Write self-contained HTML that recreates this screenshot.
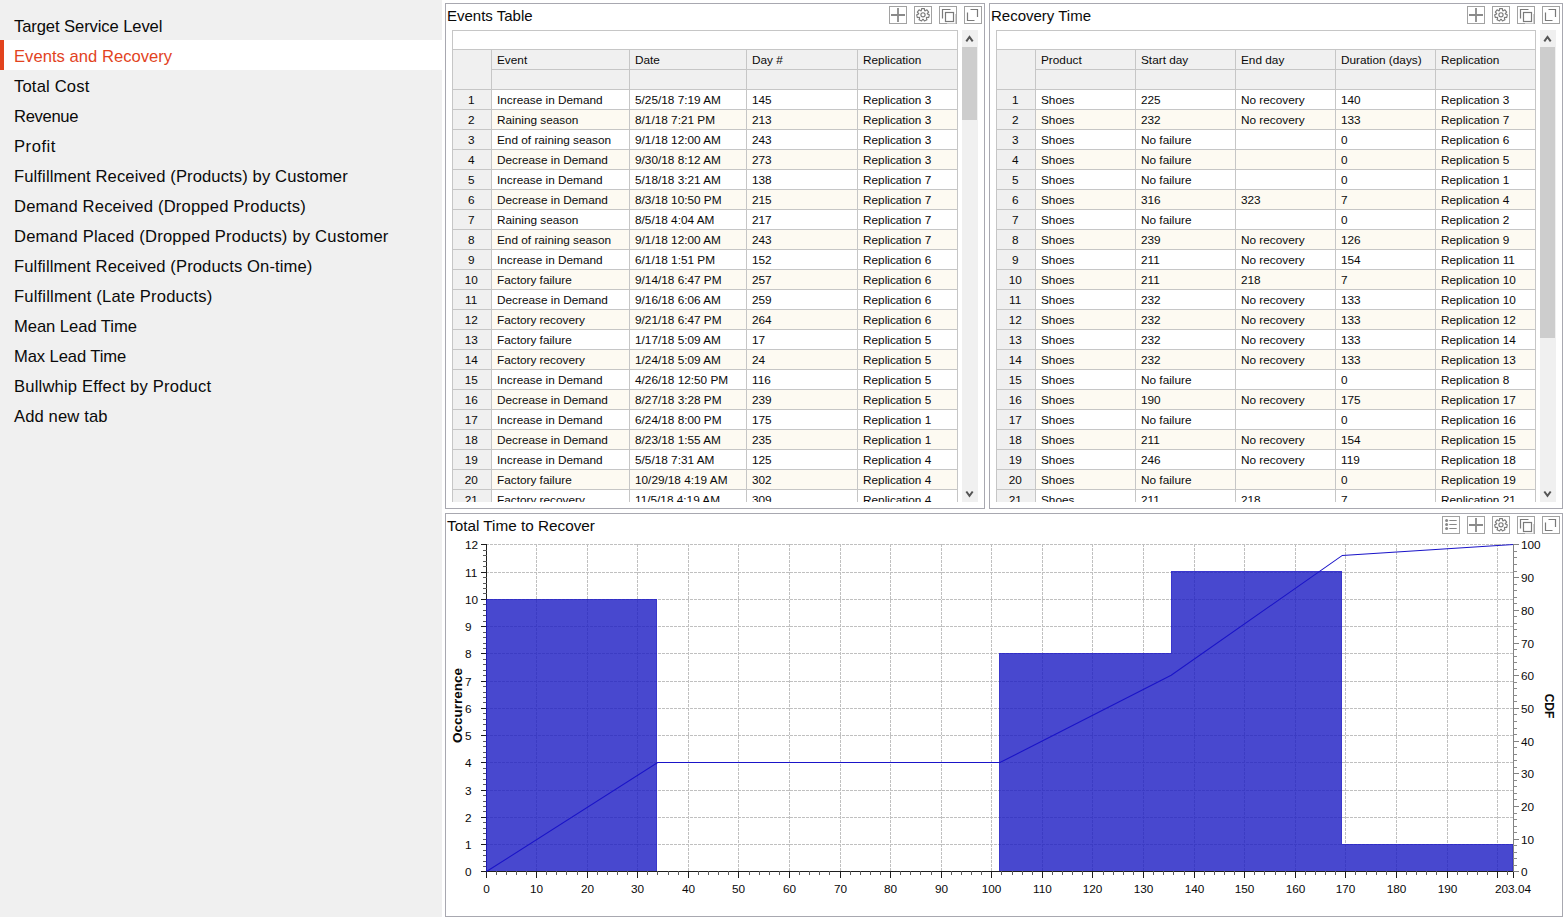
<!DOCTYPE html><html><head><meta charset="utf-8"><title>Events and Recovery</title>
<style>html,body{margin:0;padding:0;background:#fff;overflow:hidden;width:1563px;height:917px}svg{display:block;font-family:"Liberation Sans",sans-serif}</style></head><body>
<svg width="1563" height="917" viewBox="0 0 1563 917">
<defs>
<clipPath id="c1"><rect x="452" y="30" width="506" height="472"/></clipPath>
<clipPath id="c2"><rect x="996" y="30" width="540" height="472"/></clipPath>
</defs>
<g shape-rendering="crispEdges">
<rect x="0" y="0" width="442" height="917" fill="#f0f0f0"/>
<rect x="0" y="40" width="442" height="30" fill="#ffffff"/>
<rect x="0" y="40" width="4" height="30" fill="#e2431e"/>
</g>
<text x="14" y="32" font-size="16.6" fill="#0a0a0a" font-weight="normal" textLength="148.44" lengthAdjust="spacing">Target Service Level</text>
<text x="14" y="62" font-size="16.6" fill="#e2431e" font-weight="normal" textLength="158.13" lengthAdjust="spacing">Events and Recovery</text>
<text x="14" y="92" font-size="16.6" fill="#0a0a0a" font-weight="normal" textLength="75.28" lengthAdjust="spacing">Total Cost</text>
<text x="14" y="122" font-size="16.6" fill="#0a0a0a" font-weight="normal" textLength="64.44" lengthAdjust="spacing">Revenue</text>
<text x="14" y="152" font-size="16.6" fill="#0a0a0a" font-weight="normal" textLength="41.43" lengthAdjust="spacing">Profit</text>
<text x="14" y="182" font-size="16.6" fill="#0a0a0a" font-weight="normal" textLength="333.72" lengthAdjust="spacing">Fulfillment Received (Products) by Customer</text>
<text x="14" y="212" font-size="16.6" fill="#0a0a0a" font-weight="normal" textLength="291.82" lengthAdjust="spacing">Demand Received (Dropped Products)</text>
<text x="14" y="242" font-size="16.6" fill="#0a0a0a" font-weight="normal" textLength="374.36" lengthAdjust="spacing">Demand Placed (Dropped Products) by Customer</text>
<text x="14" y="272" font-size="16.6" fill="#0a0a0a" font-weight="normal" textLength="298.37" lengthAdjust="spacing">Fulfillment Received (Products On-time)</text>
<text x="14" y="302" font-size="16.6" fill="#0a0a0a" font-weight="normal" textLength="198.27" lengthAdjust="spacing">Fulfillment (Late Products)</text>
<text x="14" y="332" font-size="16.6" fill="#0a0a0a" font-weight="normal" textLength="122.91" lengthAdjust="spacing">Mean Lead Time</text>
<text x="14" y="362" font-size="16.6" fill="#0a0a0a" font-weight="normal" textLength="112.15" lengthAdjust="spacing">Max Lead Time</text>
<text x="14" y="392" font-size="16.6" fill="#0a0a0a" font-weight="normal" textLength="197.07" lengthAdjust="spacing">Bullwhip Effect by Product</text>
<text x="14" y="422" font-size="16.6" fill="#0a0a0a" font-weight="normal" textLength="93.47" lengthAdjust="spacing">Add new tab</text>
<g shape-rendering="crispEdges" fill="none" stroke="#a8a8b0" stroke-width="1">
<rect x="445.5" y="3.5" width="539" height="505"/>
<rect x="989.5" y="3.5" width="573" height="505"/>
<rect x="445.5" y="513.5" width="1117" height="403"/>
</g>
<text x="447" y="21" font-size="15" fill="#0a0a0a" text-anchor="start" font-weight="normal" >Events Table</text>
<text x="991" y="21" font-size="15" fill="#0a0a0a" text-anchor="start" font-weight="normal" >Recovery Time</text>
<text x="447" y="531" font-size="15.3" fill="#0a0a0a" text-anchor="start" font-weight="normal" >Total Time to Recover</text>
<rect x="889.5" y="6.5" width="17" height="17" fill="none" stroke="#a2a2a2" shape-rendering="crispEdges"/><path d="M891 15H905M898 8V22" stroke="#8a8a8a" stroke-width="1.8" fill="none"/>
<rect x="914.5" y="6.5" width="17" height="17" fill="none" stroke="#a2a2a2" shape-rendering="crispEdges"/><path d="M921.31 10.63 L921.58 8.66 L924.42 8.66 L924.69 10.63 L925.21 10.88 L926.92 9.86 L928.68 12.08 L927.31 13.52 L927.44 14.08 L929.30 14.78 L928.67 17.55 L926.69 17.37 L926.33 17.83 L926.94 19.72 L924.39 20.95 L923.29 19.29 L922.71 19.29 L921.61 20.95 L919.06 19.72 L919.67 17.83 L919.31 17.37 L917.33 17.55 L916.70 14.78 L918.56 14.08 L918.69 13.52 L917.32 12.08 L919.08 9.86 L920.79 10.88Z" fill="none" stroke="#7a7a7a" stroke-width="1.15" stroke-linejoin="round"/><circle cx="923" cy="14.8" r="2.1" fill="none" stroke="#7a7a7a" stroke-width="1.15"/>
<rect x="939.5" y="6.5" width="17" height="17" fill="none" stroke="#a2a2a2" shape-rendering="crispEdges"/><path d="M955.5 14V23.5H947" fill="none" stroke="#cfcfcf" stroke-width="1"/><path d="M942.5 18.5V9.5H950.5" fill="none" stroke="#7a7a7a" stroke-width="1.2"/><rect x="945.5" y="12.5" width="8" height="9" fill="none" stroke="#7a7a7a" stroke-width="1.2"/>
<rect x="964.5" y="6.5" width="17" height="17" fill="none" stroke="#a2a2a2" shape-rendering="crispEdges"/><path d="M970.5 9.5H977.5V17M967.5 12.5V20.5H974.5" fill="none" stroke="#7a7a7a" stroke-width="1.2"/>
<rect x="1467.5" y="6.5" width="17" height="17" fill="none" stroke="#a2a2a2" shape-rendering="crispEdges"/><path d="M1469 15H1483M1476 8V22" stroke="#8a8a8a" stroke-width="1.8" fill="none"/>
<rect x="1492.5" y="6.5" width="17" height="17" fill="none" stroke="#a2a2a2" shape-rendering="crispEdges"/><path d="M1499.31 10.63 L1499.58 8.66 L1502.42 8.66 L1502.69 10.63 L1503.21 10.88 L1504.92 9.86 L1506.68 12.08 L1505.31 13.52 L1505.44 14.08 L1507.30 14.78 L1506.67 17.55 L1504.69 17.37 L1504.33 17.83 L1504.94 19.72 L1502.39 20.95 L1501.29 19.29 L1500.71 19.29 L1499.61 20.95 L1497.06 19.72 L1497.67 17.83 L1497.31 17.37 L1495.33 17.55 L1494.70 14.78 L1496.56 14.08 L1496.69 13.52 L1495.32 12.08 L1497.08 9.86 L1498.79 10.88Z" fill="none" stroke="#7a7a7a" stroke-width="1.15" stroke-linejoin="round"/><circle cx="1501" cy="14.8" r="2.1" fill="none" stroke="#7a7a7a" stroke-width="1.15"/>
<rect x="1517.5" y="6.5" width="17" height="17" fill="none" stroke="#a2a2a2" shape-rendering="crispEdges"/><path d="M1533.5 14V23.5H1525" fill="none" stroke="#cfcfcf" stroke-width="1"/><path d="M1520.5 18.5V9.5H1528.5" fill="none" stroke="#7a7a7a" stroke-width="1.2"/><rect x="1523.5" y="12.5" width="8" height="9" fill="none" stroke="#7a7a7a" stroke-width="1.2"/>
<rect x="1542.5" y="6.5" width="17" height="17" fill="none" stroke="#a2a2a2" shape-rendering="crispEdges"/><path d="M1548.5 9.5H1555.5V17M1545.5 12.5V20.5H1552.5" fill="none" stroke="#7a7a7a" stroke-width="1.2"/>
<rect x="1442.5" y="516.5" width="17" height="17" fill="none" stroke="#a2a2a2" shape-rendering="crispEdges"/><circle cx="1446.6" cy="520.5" r="1.5" fill="#888"/><path d="M1449.3 520.5H1456.7" stroke="#888" stroke-width="1"/><circle cx="1446.6" cy="524.5" r="1.5" fill="#888"/><path d="M1449.3 524.5H1456.7" stroke="#888" stroke-width="1"/><circle cx="1446.6" cy="528.5" r="1.5" fill="#888"/><path d="M1449.3 528.5H1456.7" stroke="#888" stroke-width="1"/>
<rect x="1467.5" y="516.5" width="17" height="17" fill="none" stroke="#a2a2a2" shape-rendering="crispEdges"/><path d="M1469 525H1483M1476 518V532" stroke="#8a8a8a" stroke-width="1.8" fill="none"/>
<rect x="1492.5" y="516.5" width="17" height="17" fill="none" stroke="#a2a2a2" shape-rendering="crispEdges"/><path d="M1499.31 520.63 L1499.58 518.66 L1502.42 518.66 L1502.69 520.63 L1503.21 520.88 L1504.92 519.86 L1506.68 522.08 L1505.31 523.52 L1505.44 524.08 L1507.30 524.78 L1506.67 527.55 L1504.69 527.37 L1504.33 527.83 L1504.94 529.72 L1502.39 530.95 L1501.29 529.29 L1500.71 529.29 L1499.61 530.95 L1497.06 529.72 L1497.67 527.83 L1497.31 527.37 L1495.33 527.55 L1494.70 524.78 L1496.56 524.08 L1496.69 523.52 L1495.32 522.08 L1497.08 519.86 L1498.79 520.88Z" fill="none" stroke="#7a7a7a" stroke-width="1.15" stroke-linejoin="round"/><circle cx="1501" cy="524.8" r="2.1" fill="none" stroke="#7a7a7a" stroke-width="1.15"/>
<rect x="1517.5" y="516.5" width="17" height="17" fill="none" stroke="#a2a2a2" shape-rendering="crispEdges"/><path d="M1533.5 524V533.5H1525" fill="none" stroke="#cfcfcf" stroke-width="1"/><path d="M1520.5 528.5V519.5H1528.5" fill="none" stroke="#7a7a7a" stroke-width="1.2"/><rect x="1523.5" y="522.5" width="8" height="9" fill="none" stroke="#7a7a7a" stroke-width="1.2"/>
<rect x="1542.5" y="516.5" width="17" height="17" fill="none" stroke="#a2a2a2" shape-rendering="crispEdges"/><path d="M1548.5 519.5H1555.5V527M1545.5 522.5V530.5H1552.5" fill="none" stroke="#7a7a7a" stroke-width="1.2"/>
<g clip-path="url(#c1)">
<g shape-rendering="crispEdges">
<rect x="452" y="49" width="39" height="453" fill="#f0f0f0"/>
<rect x="491" y="49" width="466" height="40" fill="#f0f0f0"/>
<rect x="491" y="89" width="466" height="20" fill="#ffffff"/>
<rect x="491" y="109" width="466" height="20" fill="#fdfaf2"/>
<rect x="491" y="129" width="466" height="20" fill="#ffffff"/>
<rect x="491" y="149" width="466" height="20" fill="#fdfaf2"/>
<rect x="491" y="169" width="466" height="20" fill="#ffffff"/>
<rect x="491" y="189" width="466" height="20" fill="#fdfaf2"/>
<rect x="491" y="209" width="466" height="20" fill="#ffffff"/>
<rect x="491" y="229" width="466" height="20" fill="#fdfaf2"/>
<rect x="491" y="249" width="466" height="20" fill="#ffffff"/>
<rect x="491" y="269" width="466" height="20" fill="#fdfaf2"/>
<rect x="491" y="289" width="466" height="20" fill="#ffffff"/>
<rect x="491" y="309" width="466" height="20" fill="#fdfaf2"/>
<rect x="491" y="329" width="466" height="20" fill="#ffffff"/>
<rect x="491" y="349" width="466" height="20" fill="#fdfaf2"/>
<rect x="491" y="369" width="466" height="20" fill="#ffffff"/>
<rect x="491" y="389" width="466" height="20" fill="#fdfaf2"/>
<rect x="491" y="409" width="466" height="20" fill="#ffffff"/>
<rect x="491" y="429" width="466" height="20" fill="#fdfaf2"/>
<rect x="491" y="449" width="466" height="20" fill="#ffffff"/>
<rect x="491" y="469" width="466" height="20" fill="#fdfaf2"/>
<rect x="491" y="489" width="466" height="20" fill="#ffffff"/>
<path d="M452 30.5H958 M452 49.5H958 M491 69.5H958 M452 89.5H958 M452 109.5H958 M452 129.5H958 M452 149.5H958 M452 169.5H958 M452 189.5H958 M452 209.5H958 M452 229.5H958 M452 249.5H958 M452 269.5H958 M452 289.5H958 M452 309.5H958 M452 329.5H958 M452 349.5H958 M452 369.5H958 M452 389.5H958 M452 409.5H958 M452 429.5H958 M452 449.5H958 M452 469.5H958 M452 489.5H958 M452 509.5H958 M452.5 30V502 M957.5 30V502 M491.5 49V502 M629.5 49V502 M746.5 49V502 M857.5 49V502" stroke="#c6c6c6" stroke-width="1" fill="none"/>
</g>
<text x="497" y="64" font-size="11.8" fill="#0a0a0a" text-anchor="start" font-weight="normal" >Event</text>
<text x="635" y="64" font-size="11.8" fill="#0a0a0a" text-anchor="start" font-weight="normal" >Date</text>
<text x="752" y="64" font-size="11.8" fill="#0a0a0a" text-anchor="start" font-weight="normal" >Day #</text>
<text x="863" y="64" font-size="11.8" fill="#0a0a0a" text-anchor="start" font-weight="normal" >Replication</text>
<text x="471.2" y="104" font-size="11.8" fill="#0a0a0a" text-anchor="middle" font-weight="normal" >1</text>
<text x="497" y="104" font-size="11.8" fill="#0a0a0a" text-anchor="start" font-weight="normal" >Increase in Demand</text>
<text x="635" y="104" font-size="11.8" fill="#0a0a0a" text-anchor="start" font-weight="normal" >5/25/18 7:19 AM</text>
<text x="752" y="104" font-size="11.8" fill="#0a0a0a" text-anchor="start" font-weight="normal" >145</text>
<text x="863" y="104" font-size="11.8" fill="#0a0a0a" text-anchor="start" font-weight="normal" >Replication 3</text>
<text x="471.2" y="124" font-size="11.8" fill="#0a0a0a" text-anchor="middle" font-weight="normal" >2</text>
<text x="497" y="124" font-size="11.8" fill="#0a0a0a" text-anchor="start" font-weight="normal" >Raining season</text>
<text x="635" y="124" font-size="11.8" fill="#0a0a0a" text-anchor="start" font-weight="normal" >8/1/18 7:21 PM</text>
<text x="752" y="124" font-size="11.8" fill="#0a0a0a" text-anchor="start" font-weight="normal" >213</text>
<text x="863" y="124" font-size="11.8" fill="#0a0a0a" text-anchor="start" font-weight="normal" >Replication 3</text>
<text x="471.2" y="144" font-size="11.8" fill="#0a0a0a" text-anchor="middle" font-weight="normal" >3</text>
<text x="497" y="144" font-size="11.8" fill="#0a0a0a" text-anchor="start" font-weight="normal" >End of raining season</text>
<text x="635" y="144" font-size="11.8" fill="#0a0a0a" text-anchor="start" font-weight="normal" >9/1/18 12:00 AM</text>
<text x="752" y="144" font-size="11.8" fill="#0a0a0a" text-anchor="start" font-weight="normal" >243</text>
<text x="863" y="144" font-size="11.8" fill="#0a0a0a" text-anchor="start" font-weight="normal" >Replication 3</text>
<text x="471.2" y="164" font-size="11.8" fill="#0a0a0a" text-anchor="middle" font-weight="normal" >4</text>
<text x="497" y="164" font-size="11.8" fill="#0a0a0a" text-anchor="start" font-weight="normal" >Decrease in Demand</text>
<text x="635" y="164" font-size="11.8" fill="#0a0a0a" text-anchor="start" font-weight="normal" >9/30/18 8:12 AM</text>
<text x="752" y="164" font-size="11.8" fill="#0a0a0a" text-anchor="start" font-weight="normal" >273</text>
<text x="863" y="164" font-size="11.8" fill="#0a0a0a" text-anchor="start" font-weight="normal" >Replication 3</text>
<text x="471.2" y="184" font-size="11.8" fill="#0a0a0a" text-anchor="middle" font-weight="normal" >5</text>
<text x="497" y="184" font-size="11.8" fill="#0a0a0a" text-anchor="start" font-weight="normal" >Increase in Demand</text>
<text x="635" y="184" font-size="11.8" fill="#0a0a0a" text-anchor="start" font-weight="normal" >5/18/18 3:21 AM</text>
<text x="752" y="184" font-size="11.8" fill="#0a0a0a" text-anchor="start" font-weight="normal" >138</text>
<text x="863" y="184" font-size="11.8" fill="#0a0a0a" text-anchor="start" font-weight="normal" >Replication 7</text>
<text x="471.2" y="204" font-size="11.8" fill="#0a0a0a" text-anchor="middle" font-weight="normal" >6</text>
<text x="497" y="204" font-size="11.8" fill="#0a0a0a" text-anchor="start" font-weight="normal" >Decrease in Demand</text>
<text x="635" y="204" font-size="11.8" fill="#0a0a0a" text-anchor="start" font-weight="normal" >8/3/18 10:50 PM</text>
<text x="752" y="204" font-size="11.8" fill="#0a0a0a" text-anchor="start" font-weight="normal" >215</text>
<text x="863" y="204" font-size="11.8" fill="#0a0a0a" text-anchor="start" font-weight="normal" >Replication 7</text>
<text x="471.2" y="224" font-size="11.8" fill="#0a0a0a" text-anchor="middle" font-weight="normal" >7</text>
<text x="497" y="224" font-size="11.8" fill="#0a0a0a" text-anchor="start" font-weight="normal" >Raining season</text>
<text x="635" y="224" font-size="11.8" fill="#0a0a0a" text-anchor="start" font-weight="normal" >8/5/18 4:04 AM</text>
<text x="752" y="224" font-size="11.8" fill="#0a0a0a" text-anchor="start" font-weight="normal" >217</text>
<text x="863" y="224" font-size="11.8" fill="#0a0a0a" text-anchor="start" font-weight="normal" >Replication 7</text>
<text x="471.2" y="244" font-size="11.8" fill="#0a0a0a" text-anchor="middle" font-weight="normal" >8</text>
<text x="497" y="244" font-size="11.8" fill="#0a0a0a" text-anchor="start" font-weight="normal" >End of raining season</text>
<text x="635" y="244" font-size="11.8" fill="#0a0a0a" text-anchor="start" font-weight="normal" >9/1/18 12:00 AM</text>
<text x="752" y="244" font-size="11.8" fill="#0a0a0a" text-anchor="start" font-weight="normal" >243</text>
<text x="863" y="244" font-size="11.8" fill="#0a0a0a" text-anchor="start" font-weight="normal" >Replication 7</text>
<text x="471.2" y="264" font-size="11.8" fill="#0a0a0a" text-anchor="middle" font-weight="normal" >9</text>
<text x="497" y="264" font-size="11.8" fill="#0a0a0a" text-anchor="start" font-weight="normal" >Increase in Demand</text>
<text x="635" y="264" font-size="11.8" fill="#0a0a0a" text-anchor="start" font-weight="normal" >6/1/18 1:51 PM</text>
<text x="752" y="264" font-size="11.8" fill="#0a0a0a" text-anchor="start" font-weight="normal" >152</text>
<text x="863" y="264" font-size="11.8" fill="#0a0a0a" text-anchor="start" font-weight="normal" >Replication 6</text>
<text x="471.2" y="284" font-size="11.8" fill="#0a0a0a" text-anchor="middle" font-weight="normal" >10</text>
<text x="497" y="284" font-size="11.8" fill="#0a0a0a" text-anchor="start" font-weight="normal" >Factory failure</text>
<text x="635" y="284" font-size="11.8" fill="#0a0a0a" text-anchor="start" font-weight="normal" >9/14/18 6:47 PM</text>
<text x="752" y="284" font-size="11.8" fill="#0a0a0a" text-anchor="start" font-weight="normal" >257</text>
<text x="863" y="284" font-size="11.8" fill="#0a0a0a" text-anchor="start" font-weight="normal" >Replication 6</text>
<text x="471.2" y="304" font-size="11.8" fill="#0a0a0a" text-anchor="middle" font-weight="normal" >11</text>
<text x="497" y="304" font-size="11.8" fill="#0a0a0a" text-anchor="start" font-weight="normal" >Decrease in Demand</text>
<text x="635" y="304" font-size="11.8" fill="#0a0a0a" text-anchor="start" font-weight="normal" >9/16/18 6:06 AM</text>
<text x="752" y="304" font-size="11.8" fill="#0a0a0a" text-anchor="start" font-weight="normal" >259</text>
<text x="863" y="304" font-size="11.8" fill="#0a0a0a" text-anchor="start" font-weight="normal" >Replication 6</text>
<text x="471.2" y="324" font-size="11.8" fill="#0a0a0a" text-anchor="middle" font-weight="normal" >12</text>
<text x="497" y="324" font-size="11.8" fill="#0a0a0a" text-anchor="start" font-weight="normal" >Factory recovery</text>
<text x="635" y="324" font-size="11.8" fill="#0a0a0a" text-anchor="start" font-weight="normal" >9/21/18 6:47 PM</text>
<text x="752" y="324" font-size="11.8" fill="#0a0a0a" text-anchor="start" font-weight="normal" >264</text>
<text x="863" y="324" font-size="11.8" fill="#0a0a0a" text-anchor="start" font-weight="normal" >Replication 6</text>
<text x="471.2" y="344" font-size="11.8" fill="#0a0a0a" text-anchor="middle" font-weight="normal" >13</text>
<text x="497" y="344" font-size="11.8" fill="#0a0a0a" text-anchor="start" font-weight="normal" >Factory failure</text>
<text x="635" y="344" font-size="11.8" fill="#0a0a0a" text-anchor="start" font-weight="normal" >1/17/18 5:09 AM</text>
<text x="752" y="344" font-size="11.8" fill="#0a0a0a" text-anchor="start" font-weight="normal" >17</text>
<text x="863" y="344" font-size="11.8" fill="#0a0a0a" text-anchor="start" font-weight="normal" >Replication 5</text>
<text x="471.2" y="364" font-size="11.8" fill="#0a0a0a" text-anchor="middle" font-weight="normal" >14</text>
<text x="497" y="364" font-size="11.8" fill="#0a0a0a" text-anchor="start" font-weight="normal" >Factory recovery</text>
<text x="635" y="364" font-size="11.8" fill="#0a0a0a" text-anchor="start" font-weight="normal" >1/24/18 5:09 AM</text>
<text x="752" y="364" font-size="11.8" fill="#0a0a0a" text-anchor="start" font-weight="normal" >24</text>
<text x="863" y="364" font-size="11.8" fill="#0a0a0a" text-anchor="start" font-weight="normal" >Replication 5</text>
<text x="471.2" y="384" font-size="11.8" fill="#0a0a0a" text-anchor="middle" font-weight="normal" >15</text>
<text x="497" y="384" font-size="11.8" fill="#0a0a0a" text-anchor="start" font-weight="normal" >Increase in Demand</text>
<text x="635" y="384" font-size="11.8" fill="#0a0a0a" text-anchor="start" font-weight="normal" >4/26/18 12:50 PM</text>
<text x="752" y="384" font-size="11.8" fill="#0a0a0a" text-anchor="start" font-weight="normal" >116</text>
<text x="863" y="384" font-size="11.8" fill="#0a0a0a" text-anchor="start" font-weight="normal" >Replication 5</text>
<text x="471.2" y="404" font-size="11.8" fill="#0a0a0a" text-anchor="middle" font-weight="normal" >16</text>
<text x="497" y="404" font-size="11.8" fill="#0a0a0a" text-anchor="start" font-weight="normal" >Decrease in Demand</text>
<text x="635" y="404" font-size="11.8" fill="#0a0a0a" text-anchor="start" font-weight="normal" >8/27/18 3:28 PM</text>
<text x="752" y="404" font-size="11.8" fill="#0a0a0a" text-anchor="start" font-weight="normal" >239</text>
<text x="863" y="404" font-size="11.8" fill="#0a0a0a" text-anchor="start" font-weight="normal" >Replication 5</text>
<text x="471.2" y="424" font-size="11.8" fill="#0a0a0a" text-anchor="middle" font-weight="normal" >17</text>
<text x="497" y="424" font-size="11.8" fill="#0a0a0a" text-anchor="start" font-weight="normal" >Increase in Demand</text>
<text x="635" y="424" font-size="11.8" fill="#0a0a0a" text-anchor="start" font-weight="normal" >6/24/18 8:00 PM</text>
<text x="752" y="424" font-size="11.8" fill="#0a0a0a" text-anchor="start" font-weight="normal" >175</text>
<text x="863" y="424" font-size="11.8" fill="#0a0a0a" text-anchor="start" font-weight="normal" >Replication 1</text>
<text x="471.2" y="444" font-size="11.8" fill="#0a0a0a" text-anchor="middle" font-weight="normal" >18</text>
<text x="497" y="444" font-size="11.8" fill="#0a0a0a" text-anchor="start" font-weight="normal" >Decrease in Demand</text>
<text x="635" y="444" font-size="11.8" fill="#0a0a0a" text-anchor="start" font-weight="normal" >8/23/18 1:55 AM</text>
<text x="752" y="444" font-size="11.8" fill="#0a0a0a" text-anchor="start" font-weight="normal" >235</text>
<text x="863" y="444" font-size="11.8" fill="#0a0a0a" text-anchor="start" font-weight="normal" >Replication 1</text>
<text x="471.2" y="464" font-size="11.8" fill="#0a0a0a" text-anchor="middle" font-weight="normal" >19</text>
<text x="497" y="464" font-size="11.8" fill="#0a0a0a" text-anchor="start" font-weight="normal" >Increase in Demand</text>
<text x="635" y="464" font-size="11.8" fill="#0a0a0a" text-anchor="start" font-weight="normal" >5/5/18 7:31 AM</text>
<text x="752" y="464" font-size="11.8" fill="#0a0a0a" text-anchor="start" font-weight="normal" >125</text>
<text x="863" y="464" font-size="11.8" fill="#0a0a0a" text-anchor="start" font-weight="normal" >Replication 4</text>
<text x="471.2" y="484" font-size="11.8" fill="#0a0a0a" text-anchor="middle" font-weight="normal" >20</text>
<text x="497" y="484" font-size="11.8" fill="#0a0a0a" text-anchor="start" font-weight="normal" >Factory failure</text>
<text x="635" y="484" font-size="11.8" fill="#0a0a0a" text-anchor="start" font-weight="normal" >10/29/18 4:19 AM</text>
<text x="752" y="484" font-size="11.8" fill="#0a0a0a" text-anchor="start" font-weight="normal" >302</text>
<text x="863" y="484" font-size="11.8" fill="#0a0a0a" text-anchor="start" font-weight="normal" >Replication 4</text>
<text x="471.2" y="504" font-size="11.8" fill="#0a0a0a" text-anchor="middle" font-weight="normal" >21</text>
<text x="497" y="504" font-size="11.8" fill="#0a0a0a" text-anchor="start" font-weight="normal" >Factory recovery</text>
<text x="635" y="504" font-size="11.8" fill="#0a0a0a" text-anchor="start" font-weight="normal" >11/5/18 4:19 AM</text>
<text x="752" y="504" font-size="11.8" fill="#0a0a0a" text-anchor="start" font-weight="normal" >309</text>
<text x="863" y="504" font-size="11.8" fill="#0a0a0a" text-anchor="start" font-weight="normal" >Replication 4</text>
</g>
<g shape-rendering="crispEdges">
<rect x="962" y="30" width="16" height="472" fill="#f0f0f0"/>
<rect x="962" y="47" width="15" height="73" fill="#cdcdcd"/>
</g>
<path d="M966.3 41.3L969.5 37L972.7 41.3" fill="none" stroke="#555" stroke-width="2"/>
<path d="M966.3 491.5L969.5 495.8L972.7 491.5" fill="none" stroke="#555" stroke-width="2"/>
<g clip-path="url(#c2)">
<g shape-rendering="crispEdges">
<rect x="996" y="49" width="39" height="453" fill="#f0f0f0"/>
<rect x="1035" y="49" width="500" height="40" fill="#f0f0f0"/>
<rect x="1035" y="89" width="500" height="20" fill="#ffffff"/>
<rect x="1035" y="109" width="500" height="20" fill="#fdfaf2"/>
<rect x="1035" y="129" width="500" height="20" fill="#ffffff"/>
<rect x="1035" y="149" width="500" height="20" fill="#fdfaf2"/>
<rect x="1035" y="169" width="500" height="20" fill="#ffffff"/>
<rect x="1035" y="189" width="500" height="20" fill="#fdfaf2"/>
<rect x="1035" y="209" width="500" height="20" fill="#ffffff"/>
<rect x="1035" y="229" width="500" height="20" fill="#fdfaf2"/>
<rect x="1035" y="249" width="500" height="20" fill="#ffffff"/>
<rect x="1035" y="269" width="500" height="20" fill="#fdfaf2"/>
<rect x="1035" y="289" width="500" height="20" fill="#ffffff"/>
<rect x="1035" y="309" width="500" height="20" fill="#fdfaf2"/>
<rect x="1035" y="329" width="500" height="20" fill="#ffffff"/>
<rect x="1035" y="349" width="500" height="20" fill="#fdfaf2"/>
<rect x="1035" y="369" width="500" height="20" fill="#ffffff"/>
<rect x="1035" y="389" width="500" height="20" fill="#fdfaf2"/>
<rect x="1035" y="409" width="500" height="20" fill="#ffffff"/>
<rect x="1035" y="429" width="500" height="20" fill="#fdfaf2"/>
<rect x="1035" y="449" width="500" height="20" fill="#ffffff"/>
<rect x="1035" y="469" width="500" height="20" fill="#fdfaf2"/>
<rect x="1035" y="489" width="500" height="20" fill="#ffffff"/>
<path d="M996 30.5H1536 M996 49.5H1536 M1035 69.5H1536 M996 89.5H1536 M996 109.5H1536 M996 129.5H1536 M996 149.5H1536 M996 169.5H1536 M996 189.5H1536 M996 209.5H1536 M996 229.5H1536 M996 249.5H1536 M996 269.5H1536 M996 289.5H1536 M996 309.5H1536 M996 329.5H1536 M996 349.5H1536 M996 369.5H1536 M996 389.5H1536 M996 409.5H1536 M996 429.5H1536 M996 449.5H1536 M996 469.5H1536 M996 489.5H1536 M996 509.5H1536 M996.5 30V502 M1535.5 30V502 M1035.5 49V502 M1135.5 49V502 M1235.5 49V502 M1335.5 49V502 M1435.5 49V502" stroke="#c6c6c6" stroke-width="1" fill="none"/>
</g>
<text x="1041" y="64" font-size="11.8" fill="#0a0a0a" text-anchor="start" font-weight="normal" >Product</text>
<text x="1141" y="64" font-size="11.8" fill="#0a0a0a" text-anchor="start" font-weight="normal" >Start day</text>
<text x="1241" y="64" font-size="11.8" fill="#0a0a0a" text-anchor="start" font-weight="normal" >End day</text>
<text x="1341" y="64" font-size="11.8" fill="#0a0a0a" text-anchor="start" font-weight="normal" >Duration (days)</text>
<text x="1441" y="64" font-size="11.8" fill="#0a0a0a" text-anchor="start" font-weight="normal" >Replication</text>
<text x="1015.2" y="104" font-size="11.8" fill="#0a0a0a" text-anchor="middle" font-weight="normal" >1</text>
<text x="1041" y="104" font-size="11.8" fill="#0a0a0a" text-anchor="start" font-weight="normal" >Shoes</text>
<text x="1141" y="104" font-size="11.8" fill="#0a0a0a" text-anchor="start" font-weight="normal" >225</text>
<text x="1241" y="104" font-size="11.8" fill="#0a0a0a" text-anchor="start" font-weight="normal" >No recovery</text>
<text x="1341" y="104" font-size="11.8" fill="#0a0a0a" text-anchor="start" font-weight="normal" >140</text>
<text x="1441" y="104" font-size="11.8" fill="#0a0a0a" text-anchor="start" font-weight="normal" >Replication 3</text>
<text x="1015.2" y="124" font-size="11.8" fill="#0a0a0a" text-anchor="middle" font-weight="normal" >2</text>
<text x="1041" y="124" font-size="11.8" fill="#0a0a0a" text-anchor="start" font-weight="normal" >Shoes</text>
<text x="1141" y="124" font-size="11.8" fill="#0a0a0a" text-anchor="start" font-weight="normal" >232</text>
<text x="1241" y="124" font-size="11.8" fill="#0a0a0a" text-anchor="start" font-weight="normal" >No recovery</text>
<text x="1341" y="124" font-size="11.8" fill="#0a0a0a" text-anchor="start" font-weight="normal" >133</text>
<text x="1441" y="124" font-size="11.8" fill="#0a0a0a" text-anchor="start" font-weight="normal" >Replication 7</text>
<text x="1015.2" y="144" font-size="11.8" fill="#0a0a0a" text-anchor="middle" font-weight="normal" >3</text>
<text x="1041" y="144" font-size="11.8" fill="#0a0a0a" text-anchor="start" font-weight="normal" >Shoes</text>
<text x="1141" y="144" font-size="11.8" fill="#0a0a0a" text-anchor="start" font-weight="normal" >No failure</text>
<text x="1341" y="144" font-size="11.8" fill="#0a0a0a" text-anchor="start" font-weight="normal" >0</text>
<text x="1441" y="144" font-size="11.8" fill="#0a0a0a" text-anchor="start" font-weight="normal" >Replication 6</text>
<text x="1015.2" y="164" font-size="11.8" fill="#0a0a0a" text-anchor="middle" font-weight="normal" >4</text>
<text x="1041" y="164" font-size="11.8" fill="#0a0a0a" text-anchor="start" font-weight="normal" >Shoes</text>
<text x="1141" y="164" font-size="11.8" fill="#0a0a0a" text-anchor="start" font-weight="normal" >No failure</text>
<text x="1341" y="164" font-size="11.8" fill="#0a0a0a" text-anchor="start" font-weight="normal" >0</text>
<text x="1441" y="164" font-size="11.8" fill="#0a0a0a" text-anchor="start" font-weight="normal" >Replication 5</text>
<text x="1015.2" y="184" font-size="11.8" fill="#0a0a0a" text-anchor="middle" font-weight="normal" >5</text>
<text x="1041" y="184" font-size="11.8" fill="#0a0a0a" text-anchor="start" font-weight="normal" >Shoes</text>
<text x="1141" y="184" font-size="11.8" fill="#0a0a0a" text-anchor="start" font-weight="normal" >No failure</text>
<text x="1341" y="184" font-size="11.8" fill="#0a0a0a" text-anchor="start" font-weight="normal" >0</text>
<text x="1441" y="184" font-size="11.8" fill="#0a0a0a" text-anchor="start" font-weight="normal" >Replication 1</text>
<text x="1015.2" y="204" font-size="11.8" fill="#0a0a0a" text-anchor="middle" font-weight="normal" >6</text>
<text x="1041" y="204" font-size="11.8" fill="#0a0a0a" text-anchor="start" font-weight="normal" >Shoes</text>
<text x="1141" y="204" font-size="11.8" fill="#0a0a0a" text-anchor="start" font-weight="normal" >316</text>
<text x="1241" y="204" font-size="11.8" fill="#0a0a0a" text-anchor="start" font-weight="normal" >323</text>
<text x="1341" y="204" font-size="11.8" fill="#0a0a0a" text-anchor="start" font-weight="normal" >7</text>
<text x="1441" y="204" font-size="11.8" fill="#0a0a0a" text-anchor="start" font-weight="normal" >Replication 4</text>
<text x="1015.2" y="224" font-size="11.8" fill="#0a0a0a" text-anchor="middle" font-weight="normal" >7</text>
<text x="1041" y="224" font-size="11.8" fill="#0a0a0a" text-anchor="start" font-weight="normal" >Shoes</text>
<text x="1141" y="224" font-size="11.8" fill="#0a0a0a" text-anchor="start" font-weight="normal" >No failure</text>
<text x="1341" y="224" font-size="11.8" fill="#0a0a0a" text-anchor="start" font-weight="normal" >0</text>
<text x="1441" y="224" font-size="11.8" fill="#0a0a0a" text-anchor="start" font-weight="normal" >Replication 2</text>
<text x="1015.2" y="244" font-size="11.8" fill="#0a0a0a" text-anchor="middle" font-weight="normal" >8</text>
<text x="1041" y="244" font-size="11.8" fill="#0a0a0a" text-anchor="start" font-weight="normal" >Shoes</text>
<text x="1141" y="244" font-size="11.8" fill="#0a0a0a" text-anchor="start" font-weight="normal" >239</text>
<text x="1241" y="244" font-size="11.8" fill="#0a0a0a" text-anchor="start" font-weight="normal" >No recovery</text>
<text x="1341" y="244" font-size="11.8" fill="#0a0a0a" text-anchor="start" font-weight="normal" >126</text>
<text x="1441" y="244" font-size="11.8" fill="#0a0a0a" text-anchor="start" font-weight="normal" >Replication 9</text>
<text x="1015.2" y="264" font-size="11.8" fill="#0a0a0a" text-anchor="middle" font-weight="normal" >9</text>
<text x="1041" y="264" font-size="11.8" fill="#0a0a0a" text-anchor="start" font-weight="normal" >Shoes</text>
<text x="1141" y="264" font-size="11.8" fill="#0a0a0a" text-anchor="start" font-weight="normal" >211</text>
<text x="1241" y="264" font-size="11.8" fill="#0a0a0a" text-anchor="start" font-weight="normal" >No recovery</text>
<text x="1341" y="264" font-size="11.8" fill="#0a0a0a" text-anchor="start" font-weight="normal" >154</text>
<text x="1441" y="264" font-size="11.8" fill="#0a0a0a" text-anchor="start" font-weight="normal" >Replication 11</text>
<text x="1015.2" y="284" font-size="11.8" fill="#0a0a0a" text-anchor="middle" font-weight="normal" >10</text>
<text x="1041" y="284" font-size="11.8" fill="#0a0a0a" text-anchor="start" font-weight="normal" >Shoes</text>
<text x="1141" y="284" font-size="11.8" fill="#0a0a0a" text-anchor="start" font-weight="normal" >211</text>
<text x="1241" y="284" font-size="11.8" fill="#0a0a0a" text-anchor="start" font-weight="normal" >218</text>
<text x="1341" y="284" font-size="11.8" fill="#0a0a0a" text-anchor="start" font-weight="normal" >7</text>
<text x="1441" y="284" font-size="11.8" fill="#0a0a0a" text-anchor="start" font-weight="normal" >Replication 10</text>
<text x="1015.2" y="304" font-size="11.8" fill="#0a0a0a" text-anchor="middle" font-weight="normal" >11</text>
<text x="1041" y="304" font-size="11.8" fill="#0a0a0a" text-anchor="start" font-weight="normal" >Shoes</text>
<text x="1141" y="304" font-size="11.8" fill="#0a0a0a" text-anchor="start" font-weight="normal" >232</text>
<text x="1241" y="304" font-size="11.8" fill="#0a0a0a" text-anchor="start" font-weight="normal" >No recovery</text>
<text x="1341" y="304" font-size="11.8" fill="#0a0a0a" text-anchor="start" font-weight="normal" >133</text>
<text x="1441" y="304" font-size="11.8" fill="#0a0a0a" text-anchor="start" font-weight="normal" >Replication 10</text>
<text x="1015.2" y="324" font-size="11.8" fill="#0a0a0a" text-anchor="middle" font-weight="normal" >12</text>
<text x="1041" y="324" font-size="11.8" fill="#0a0a0a" text-anchor="start" font-weight="normal" >Shoes</text>
<text x="1141" y="324" font-size="11.8" fill="#0a0a0a" text-anchor="start" font-weight="normal" >232</text>
<text x="1241" y="324" font-size="11.8" fill="#0a0a0a" text-anchor="start" font-weight="normal" >No recovery</text>
<text x="1341" y="324" font-size="11.8" fill="#0a0a0a" text-anchor="start" font-weight="normal" >133</text>
<text x="1441" y="324" font-size="11.8" fill="#0a0a0a" text-anchor="start" font-weight="normal" >Replication 12</text>
<text x="1015.2" y="344" font-size="11.8" fill="#0a0a0a" text-anchor="middle" font-weight="normal" >13</text>
<text x="1041" y="344" font-size="11.8" fill="#0a0a0a" text-anchor="start" font-weight="normal" >Shoes</text>
<text x="1141" y="344" font-size="11.8" fill="#0a0a0a" text-anchor="start" font-weight="normal" >232</text>
<text x="1241" y="344" font-size="11.8" fill="#0a0a0a" text-anchor="start" font-weight="normal" >No recovery</text>
<text x="1341" y="344" font-size="11.8" fill="#0a0a0a" text-anchor="start" font-weight="normal" >133</text>
<text x="1441" y="344" font-size="11.8" fill="#0a0a0a" text-anchor="start" font-weight="normal" >Replication 14</text>
<text x="1015.2" y="364" font-size="11.8" fill="#0a0a0a" text-anchor="middle" font-weight="normal" >14</text>
<text x="1041" y="364" font-size="11.8" fill="#0a0a0a" text-anchor="start" font-weight="normal" >Shoes</text>
<text x="1141" y="364" font-size="11.8" fill="#0a0a0a" text-anchor="start" font-weight="normal" >232</text>
<text x="1241" y="364" font-size="11.8" fill="#0a0a0a" text-anchor="start" font-weight="normal" >No recovery</text>
<text x="1341" y="364" font-size="11.8" fill="#0a0a0a" text-anchor="start" font-weight="normal" >133</text>
<text x="1441" y="364" font-size="11.8" fill="#0a0a0a" text-anchor="start" font-weight="normal" >Replication 13</text>
<text x="1015.2" y="384" font-size="11.8" fill="#0a0a0a" text-anchor="middle" font-weight="normal" >15</text>
<text x="1041" y="384" font-size="11.8" fill="#0a0a0a" text-anchor="start" font-weight="normal" >Shoes</text>
<text x="1141" y="384" font-size="11.8" fill="#0a0a0a" text-anchor="start" font-weight="normal" >No failure</text>
<text x="1341" y="384" font-size="11.8" fill="#0a0a0a" text-anchor="start" font-weight="normal" >0</text>
<text x="1441" y="384" font-size="11.8" fill="#0a0a0a" text-anchor="start" font-weight="normal" >Replication 8</text>
<text x="1015.2" y="404" font-size="11.8" fill="#0a0a0a" text-anchor="middle" font-weight="normal" >16</text>
<text x="1041" y="404" font-size="11.8" fill="#0a0a0a" text-anchor="start" font-weight="normal" >Shoes</text>
<text x="1141" y="404" font-size="11.8" fill="#0a0a0a" text-anchor="start" font-weight="normal" >190</text>
<text x="1241" y="404" font-size="11.8" fill="#0a0a0a" text-anchor="start" font-weight="normal" >No recovery</text>
<text x="1341" y="404" font-size="11.8" fill="#0a0a0a" text-anchor="start" font-weight="normal" >175</text>
<text x="1441" y="404" font-size="11.8" fill="#0a0a0a" text-anchor="start" font-weight="normal" >Replication 17</text>
<text x="1015.2" y="424" font-size="11.8" fill="#0a0a0a" text-anchor="middle" font-weight="normal" >17</text>
<text x="1041" y="424" font-size="11.8" fill="#0a0a0a" text-anchor="start" font-weight="normal" >Shoes</text>
<text x="1141" y="424" font-size="11.8" fill="#0a0a0a" text-anchor="start" font-weight="normal" >No failure</text>
<text x="1341" y="424" font-size="11.8" fill="#0a0a0a" text-anchor="start" font-weight="normal" >0</text>
<text x="1441" y="424" font-size="11.8" fill="#0a0a0a" text-anchor="start" font-weight="normal" >Replication 16</text>
<text x="1015.2" y="444" font-size="11.8" fill="#0a0a0a" text-anchor="middle" font-weight="normal" >18</text>
<text x="1041" y="444" font-size="11.8" fill="#0a0a0a" text-anchor="start" font-weight="normal" >Shoes</text>
<text x="1141" y="444" font-size="11.8" fill="#0a0a0a" text-anchor="start" font-weight="normal" >211</text>
<text x="1241" y="444" font-size="11.8" fill="#0a0a0a" text-anchor="start" font-weight="normal" >No recovery</text>
<text x="1341" y="444" font-size="11.8" fill="#0a0a0a" text-anchor="start" font-weight="normal" >154</text>
<text x="1441" y="444" font-size="11.8" fill="#0a0a0a" text-anchor="start" font-weight="normal" >Replication 15</text>
<text x="1015.2" y="464" font-size="11.8" fill="#0a0a0a" text-anchor="middle" font-weight="normal" >19</text>
<text x="1041" y="464" font-size="11.8" fill="#0a0a0a" text-anchor="start" font-weight="normal" >Shoes</text>
<text x="1141" y="464" font-size="11.8" fill="#0a0a0a" text-anchor="start" font-weight="normal" >246</text>
<text x="1241" y="464" font-size="11.8" fill="#0a0a0a" text-anchor="start" font-weight="normal" >No recovery</text>
<text x="1341" y="464" font-size="11.8" fill="#0a0a0a" text-anchor="start" font-weight="normal" >119</text>
<text x="1441" y="464" font-size="11.8" fill="#0a0a0a" text-anchor="start" font-weight="normal" >Replication 18</text>
<text x="1015.2" y="484" font-size="11.8" fill="#0a0a0a" text-anchor="middle" font-weight="normal" >20</text>
<text x="1041" y="484" font-size="11.8" fill="#0a0a0a" text-anchor="start" font-weight="normal" >Shoes</text>
<text x="1141" y="484" font-size="11.8" fill="#0a0a0a" text-anchor="start" font-weight="normal" >No failure</text>
<text x="1341" y="484" font-size="11.8" fill="#0a0a0a" text-anchor="start" font-weight="normal" >0</text>
<text x="1441" y="484" font-size="11.8" fill="#0a0a0a" text-anchor="start" font-weight="normal" >Replication 19</text>
<text x="1015.2" y="504" font-size="11.8" fill="#0a0a0a" text-anchor="middle" font-weight="normal" >21</text>
<text x="1041" y="504" font-size="11.8" fill="#0a0a0a" text-anchor="start" font-weight="normal" >Shoes</text>
<text x="1141" y="504" font-size="11.8" fill="#0a0a0a" text-anchor="start" font-weight="normal" >211</text>
<text x="1241" y="504" font-size="11.8" fill="#0a0a0a" text-anchor="start" font-weight="normal" >218</text>
<text x="1341" y="504" font-size="11.8" fill="#0a0a0a" text-anchor="start" font-weight="normal" >7</text>
<text x="1441" y="504" font-size="11.8" fill="#0a0a0a" text-anchor="start" font-weight="normal" >Replication 21</text>
</g>
<g shape-rendering="crispEdges">
<rect x="1540" y="30" width="16" height="472" fill="#f0f0f0"/>
<rect x="1540" y="47" width="15" height="291" fill="#cdcdcd"/>
</g>
<path d="M1544.3 41.3L1547.5 37L1550.7 41.3" fill="none" stroke="#555" stroke-width="2"/>
<path d="M1544.3 491.5L1547.5 495.8L1550.7 491.5" fill="none" stroke="#555" stroke-width="2"/>
<path d="M486 844.5H1513 M486 817.5H1513 M486 790.5H1513 M486 762.5H1513 M486 735.5H1513 M486 708.5H1513 M486 681.5H1513 M486 653.5H1513 M486 626.5H1513 M486 599.5H1513 M486 572.5H1513 M486 544.5H1513 M536.5 544V871 M587.5 544V871 M637.5 544V871 M688.5 544V871 M738.5 544V871 M789.5 544V871 M840.5 544V871 M890.5 544V871 M941.5 544V871 M991.5 544V871 M1042.5 544V871 M1092.5 544V871 M1143.5 544V871 M1194.5 544V871 M1244.5 544V871 M1295.5 544V871 M1345.5 544V871 M1396.5 544V871 M1447.5 544V871 M1497.5 544V871" stroke="#c0c0c0" stroke-width="1" stroke-dasharray="3 1" fill="none" shape-rendering="crispEdges"/>
<path d="M486.5 544V878 M481 871.5H1513 M481 871.5H487 M481 844.5H487 M481 817.5H487 M481 790.5H487 M481 762.5H487 M481 735.5H487 M481 708.5H487 M481 681.5H487 M481 653.5H487 M481 626.5H487 M481 599.5H487 M481 572.5H487 M481 544.5H487 M486.5 871V878 M536.5 871V878 M587.5 871V878 M637.5 871V878 M688.5 871V878 M738.5 871V878 M789.5 871V878 M840.5 871V878 M890.5 871V878 M941.5 871V878 M991.5 871V878 M1042.5 871V878 M1092.5 871V878 M1143.5 871V878 M1194.5 871V878 M1244.5 871V878 M1295.5 871V878 M1345.5 871V878 M1396.5 871V878 M1447.5 871V878 M1497.5 871V878 M1513.5 871V878" stroke="#1e1e1e" stroke-width="1" fill="none" shape-rendering="crispEdges"/>
<path d="M483 866.5H487 M483 861.5H487 M483 855.5H487 M483 850.5H487 M483 839.5H487 M483 833.5H487 M483 828.5H487 M483 822.5H487 M483 811.5H487 M483 806.5H487 M483 801.5H487 M483 795.5H487 M483 784.5H487 M483 779.5H487 M483 773.5H487 M483 768.5H487 M483 757.5H487 M483 752.5H487 M483 746.5H487 M483 741.5H487 M483 730.5H487 M483 724.5H487 M483 719.5H487 M483 713.5H487 M483 702.5H487 M483 697.5H487 M483 692.5H487 M483 686.5H487 M483 675.5H487 M483 670.5H487 M483 664.5H487 M483 659.5H487 M483 648.5H487 M483 643.5H487 M483 637.5H487 M483 632.5H487 M483 621.5H487 M483 615.5H487 M483 610.5H487 M483 604.5H487 M483 593.5H487 M483 588.5H487 M483 583.5H487 M483 577.5H487 M483 566.5H487 M483 561.5H487 M483 555.5H487 M483 550.5H487 M496.5 871V875 M506.5 871V875 M516.5 871V875 M526.5 871V875 M546.5 871V875 M556.5 871V875 M566.5 871V875 M577.5 871V875 M597.5 871V875 M607.5 871V875 M617.5 871V875 M627.5 871V875 M647.5 871V875 M657.5 871V875 M668.5 871V875 M678.5 871V875 M698.5 871V875 M708.5 871V875 M718.5 871V875 M728.5 871V875 M749.5 871V875 M759.5 871V875 M769.5 871V875 M779.5 871V875 M799.5 871V875 M809.5 871V875 M819.5 871V875 M829.5 871V875 M850.5 871V875 M860.5 871V875 M870.5 871V875 M880.5 871V875 M900.5 871V875 M910.5 871V875 M920.5 871V875 M931.5 871V875 M951.5 871V875 M961.5 871V875 M971.5 871V875 M981.5 871V875 M1001.5 871V875 M1012.5 871V875 M1022.5 871V875 M1032.5 871V875 M1052.5 871V875 M1062.5 871V875 M1072.5 871V875 M1082.5 871V875 M1103.5 871V875 M1113.5 871V875 M1123.5 871V875 M1133.5 871V875 M1153.5 871V875 M1163.5 871V875 M1173.5 871V875 M1184.5 871V875 M1204.5 871V875 M1214.5 871V875 M1224.5 871V875 M1234.5 871V875 M1254.5 871V875 M1264.5 871V875 M1275.5 871V875 M1285.5 871V875 M1305.5 871V875 M1315.5 871V875 M1325.5 871V875 M1335.5 871V875 M1355.5 871V875 M1366.5 871V875 M1376.5 871V875 M1386.5 871V875 M1406.5 871V875 M1416.5 871V875 M1426.5 871V875 M1436.5 871V875 M1457.5 871V875 M1467.5 871V875 M1477.5 871V875 M1487.5 871V875 M1507.5 871V875" stroke="#5a5a5a" stroke-width="1" fill="none" shape-rendering="crispEdges"/>
<g shape-rendering="crispEdges">
<rect x="486" y="599" width="171" height="272" fill="rgb(26,26,195)" fill-opacity="0.8"/>
<rect x="999" y="653" width="172" height="218" fill="rgb(26,26,195)" fill-opacity="0.8"/>
<rect x="1171" y="571" width="171" height="300" fill="rgb(26,26,195)" fill-opacity="0.8"/>
<rect x="1342" y="844" width="171" height="27" fill="rgb(26,26,195)" fill-opacity="0.8"/>
</g>
<path d="M486.5 871V599.5H656.5V871 M999.5 871V653.5H1171.5V571.5H1341.5V844.5H1512.5V871" fill="none" stroke="rgb(25,15,200)" stroke-opacity="0.3" shape-rendering="crispEdges"/>
<path d="M486.50 871.50 L657.67 762.50 L828.83 762.50 L1000.00 762.50 L1171.17 675.30 L1342.33 555.40 L1513.50 544.50" stroke="#1a14c8" stroke-width="1.05" fill="none"/>
<path d="M1513.5 544V871 M1513 871.5H1519 M1513 839.5H1519 M1513 806.5H1519 M1513 773.5H1519 M1513 741.5H1519 M1513 708.5H1519 M1513 675.5H1519 M1513 643.5H1519 M1513 610.5H1519 M1513 577.5H1519 M1513 544.5H1519" stroke="#828282" stroke-width="1" fill="none" shape-rendering="crispEdges"/>
<path d="M1513 865.5H1517 M1513 858.5H1517 M1513 852.5H1517 M1513 845.5H1517 M1513 832.5H1517 M1513 826.5H1517 M1513 819.5H1517 M1513 813.5H1517 M1513 799.5H1517 M1513 793.5H1517 M1513 786.5H1517 M1513 780.5H1517 M1513 767.5H1517 M1513 760.5H1517 M1513 754.5H1517 M1513 747.5H1517 M1513 734.5H1517 M1513 728.5H1517 M1513 721.5H1517 M1513 714.5H1517 M1513 701.5H1517 M1513 695.5H1517 M1513 688.5H1517 M1513 682.5H1517 M1513 669.5H1517 M1513 662.5H1517 M1513 656.5H1517 M1513 649.5H1517 M1513 636.5H1517 M1513 629.5H1517 M1513 623.5H1517 M1513 616.5H1517 M1513 603.5H1517 M1513 597.5H1517 M1513 590.5H1517 M1513 584.5H1517 M1513 571.5H1517 M1513 564.5H1517 M1513 557.5H1517 M1513 551.5H1517" stroke="#8a8a8a" stroke-width="1" fill="none" shape-rendering="crispEdges"/>
<text x="465" y="875.6" font-size="11.8" fill="#0a0a0a" text-anchor="start" font-weight="normal" >0</text>
<text x="465" y="848.6" font-size="11.8" fill="#0a0a0a" text-anchor="start" font-weight="normal" >1</text>
<text x="465" y="821.6" font-size="11.8" fill="#0a0a0a" text-anchor="start" font-weight="normal" >2</text>
<text x="465" y="794.6" font-size="11.8" fill="#0a0a0a" text-anchor="start" font-weight="normal" >3</text>
<text x="465" y="766.6" font-size="11.8" fill="#0a0a0a" text-anchor="start" font-weight="normal" >4</text>
<text x="465" y="739.6" font-size="11.8" fill="#0a0a0a" text-anchor="start" font-weight="normal" >5</text>
<text x="465" y="712.6" font-size="11.8" fill="#0a0a0a" text-anchor="start" font-weight="normal" >6</text>
<text x="465" y="685.6" font-size="11.8" fill="#0a0a0a" text-anchor="start" font-weight="normal" >7</text>
<text x="465" y="657.6" font-size="11.8" fill="#0a0a0a" text-anchor="start" font-weight="normal" >8</text>
<text x="465" y="630.6" font-size="11.8" fill="#0a0a0a" text-anchor="start" font-weight="normal" >9</text>
<text x="465" y="603.6" font-size="11.8" fill="#0a0a0a" text-anchor="start" font-weight="normal" >10</text>
<text x="465" y="576.6" font-size="11.8" fill="#0a0a0a" text-anchor="start" font-weight="normal" >11</text>
<text x="465" y="548.6" font-size="11.8" fill="#0a0a0a" text-anchor="start" font-weight="normal" >12</text>
<text x="1521" y="875.6" font-size="11.8" fill="#0a0a0a" text-anchor="start" font-weight="normal" >0</text>
<text x="1521" y="843.6" font-size="11.8" fill="#0a0a0a" text-anchor="start" font-weight="normal" >10</text>
<text x="1521" y="810.6" font-size="11.8" fill="#0a0a0a" text-anchor="start" font-weight="normal" >20</text>
<text x="1521" y="777.6" font-size="11.8" fill="#0a0a0a" text-anchor="start" font-weight="normal" >30</text>
<text x="1521" y="745.6" font-size="11.8" fill="#0a0a0a" text-anchor="start" font-weight="normal" >40</text>
<text x="1521" y="712.6" font-size="11.8" fill="#0a0a0a" text-anchor="start" font-weight="normal" >50</text>
<text x="1521" y="679.6" font-size="11.8" fill="#0a0a0a" text-anchor="start" font-weight="normal" >60</text>
<text x="1521" y="647.6" font-size="11.8" fill="#0a0a0a" text-anchor="start" font-weight="normal" >70</text>
<text x="1521" y="614.6" font-size="11.8" fill="#0a0a0a" text-anchor="start" font-weight="normal" >80</text>
<text x="1521" y="581.6" font-size="11.8" fill="#0a0a0a" text-anchor="start" font-weight="normal" >90</text>
<text x="1521" y="548.6" font-size="11.8" fill="#0a0a0a" text-anchor="start" font-weight="normal" >100</text>
<text x="486.5" y="893" font-size="11.8" fill="#0a0a0a" text-anchor="middle" font-weight="normal" >0</text>
<text x="536.5" y="893" font-size="11.8" fill="#0a0a0a" text-anchor="middle" font-weight="normal" >10</text>
<text x="587.5" y="893" font-size="11.8" fill="#0a0a0a" text-anchor="middle" font-weight="normal" >20</text>
<text x="637.5" y="893" font-size="11.8" fill="#0a0a0a" text-anchor="middle" font-weight="normal" >30</text>
<text x="688.5" y="893" font-size="11.8" fill="#0a0a0a" text-anchor="middle" font-weight="normal" >40</text>
<text x="738.5" y="893" font-size="11.8" fill="#0a0a0a" text-anchor="middle" font-weight="normal" >50</text>
<text x="789.5" y="893" font-size="11.8" fill="#0a0a0a" text-anchor="middle" font-weight="normal" >60</text>
<text x="840.5" y="893" font-size="11.8" fill="#0a0a0a" text-anchor="middle" font-weight="normal" >70</text>
<text x="890.5" y="893" font-size="11.8" fill="#0a0a0a" text-anchor="middle" font-weight="normal" >80</text>
<text x="941.5" y="893" font-size="11.8" fill="#0a0a0a" text-anchor="middle" font-weight="normal" >90</text>
<text x="991.5" y="893" font-size="11.8" fill="#0a0a0a" text-anchor="middle" font-weight="normal" >100</text>
<text x="1042.5" y="893" font-size="11.8" fill="#0a0a0a" text-anchor="middle" font-weight="normal" >110</text>
<text x="1092.5" y="893" font-size="11.8" fill="#0a0a0a" text-anchor="middle" font-weight="normal" >120</text>
<text x="1143.5" y="893" font-size="11.8" fill="#0a0a0a" text-anchor="middle" font-weight="normal" >130</text>
<text x="1194.5" y="893" font-size="11.8" fill="#0a0a0a" text-anchor="middle" font-weight="normal" >140</text>
<text x="1244.5" y="893" font-size="11.8" fill="#0a0a0a" text-anchor="middle" font-weight="normal" >150</text>
<text x="1295.5" y="893" font-size="11.8" fill="#0a0a0a" text-anchor="middle" font-weight="normal" >160</text>
<text x="1345.5" y="893" font-size="11.8" fill="#0a0a0a" text-anchor="middle" font-weight="normal" >170</text>
<text x="1396.5" y="893" font-size="11.8" fill="#0a0a0a" text-anchor="middle" font-weight="normal" >180</text>
<text x="1447.5" y="893" font-size="11.8" fill="#0a0a0a" text-anchor="middle" font-weight="normal" >190</text>
<text x="1513" y="893" font-size="11.8" fill="#0a0a0a" text-anchor="middle" font-weight="normal" >203.04</text>
<text x="0" y="0" font-size="12.6" font-weight="bold" fill="#0a0a0a" text-anchor="middle" textLength="75" lengthAdjust="spacingAndGlyphs" transform="translate(461.8 705.5) rotate(-90)">Occurrence</text>
<text x="0" y="0" font-size="12" font-weight="bold" fill="#0a0a0a" text-anchor="middle" transform="translate(1545 706) rotate(90)">CDF</text>
</svg></body></html>
